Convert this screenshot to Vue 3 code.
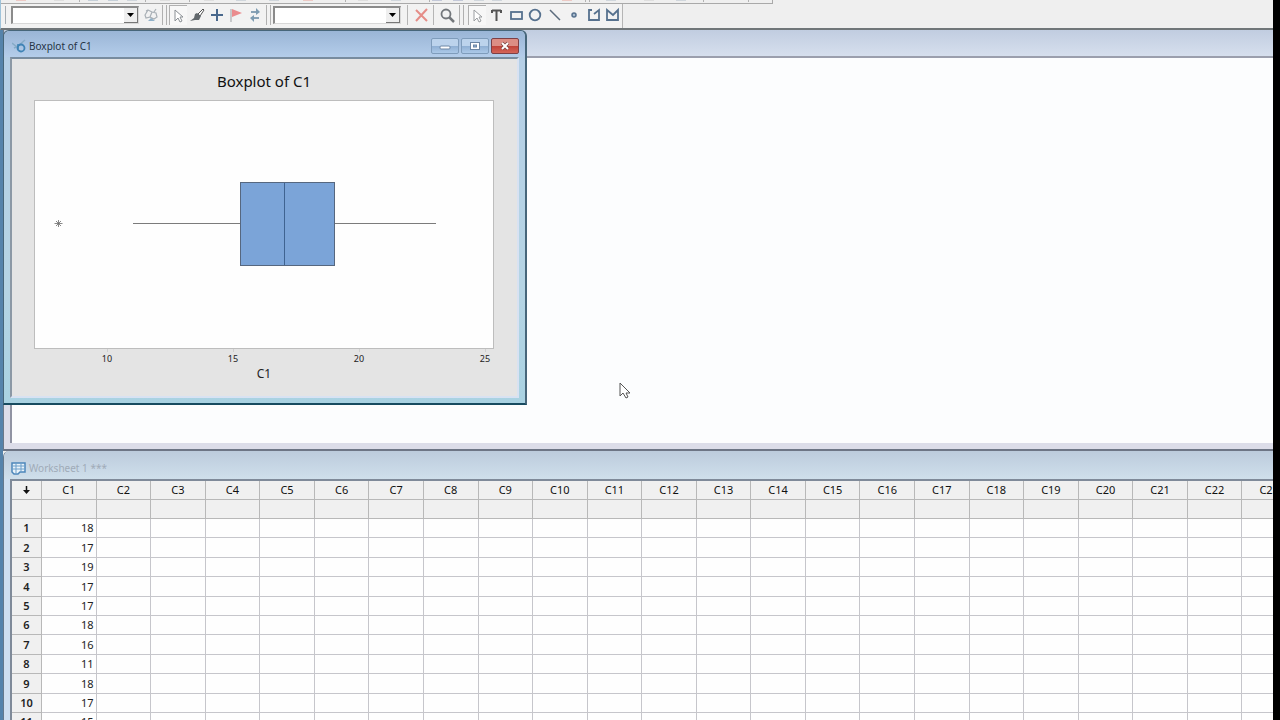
<script setup>
const columns = Array.from({ length: 23 }, (_, i) => `C${i + 1}`)
const values = [18, 17, 19, 17, 17, 18, 16, 11, 18, 17, 15]
const ticks = [
  { x: 95, label: '10' },
  { x: 221, label: '15' },
  { x: 347, label: '20' },
  { x: 473, label: '25' }
]
const upperMarks = [
  { x: 20, c: '#ecc9c4' }, { x: 58, c: '#dedede' }, { x: 92, c: '#c5cfd8' }, { x: 112, c: '#c5cfd8' },
  { x: 131, c: '#d0d6dc' }, { x: 164, c: '#dedede' }, { x: 208, c: '#dedede' }, { x: 240, c: '#d0d6dc' },
  { x: 273, c: '#d0d6dc' }, { x: 307, c: '#ecc9c4' }, { x: 362, c: '#dedede' }, { x: 395, c: '#d0d6dc' },
  { x: 436, c: '#c3c8d8' }, { x: 457, c: '#c3c8d8' }, { x: 478, c: '#d0d6dc' }, { x: 496, c: '#d0d6dc' },
  { x: 566, c: '#ecc9c4' }, { x: 610, c: '#d0d6dc' }, { x: 648, c: '#dedede' }, { x: 680, c: '#d0d6dc' }
]
const upperSeps = [78, 144, 188, 344, 428, 584, 588, 702, 747]
</script>

<template>
  <div class="page">
    <header class="toolbars">
      <div class="upper">
        <svg width="772" height="4" viewBox="0 0 772 4" aria-hidden="true">
          <rect v-for="m in upperMarks" :key="m.x" :x="m.x - 5" y="0" width="10" height="1" :fill="m.c" />
          <rect v-for="s in upperSeps" :key="s" :x="s" y="0" width="1" height="2" fill="#b2b2b2" />
        </svg>
      </div>
      <div class="row">
        <span class="grip"></span>
        <div class="combo">
          <select aria-label="Edit item"><option></option></select>
          <span class="arrow"><svg width="7" height="4" viewBox="0 0 7 4"><path d="M0 0h7L3.500 4z" fill="#000" /></svg></span>
        </div>
        <button class="tool after-combo" aria-label="Assign attributes">
          <svg width="18" height="18" viewBox="0 0 18 18" fill="none" stroke="#a9b0b6" stroke-width="1.200">
            <path d="M3 9l3-5 4 2-2 5-4 1zM6 4l-2 1M10 6l4 1 1 4-3 2-4-2M12 6l2-3M8 11l3 2" /><path d="M6 15l3-3 4 3z" fill="#8fb0c8" stroke="none" />
          </svg>
        </button>
        <span class="double"></span>
        <div class="tools edit">
          <button class="tool pressed" aria-label="Select">
            <svg width="18" height="18" viewBox="0 0 18 18"><path d="M6 3v11l3-3 2 4 2-1-2-4h3z" fill="#fff" stroke="#8a8f94" /></svg>
          </button>
          <button class="tool" aria-label="Brush">
            <svg width="18" height="18" viewBox="0 0 18 18"><path d="M15 3L10 8l2 2 4-6z" fill="#fff" stroke="#555" /><path d="M9 7l4 3-2 4H7l-5 1 4-3 1-4z" fill="#62686d" /></svg>
          </button>
          <button class="tool" aria-label="Crosshairs">
            <svg width="18" height="18" viewBox="0 0 18 18"><path d="M9 3v12M3 9h12" stroke="#49688c" stroke-width="2" /></svg>
          </button>
          <button class="tool" aria-label="Plant flag">
            <svg width="18" height="18" viewBox="0 0 18 18"><path d="M4 3v13" stroke="#9c9fa3" /><path d="M5 3l10 4-10 4z" fill="#ea8c8e" /></svg>
          </button>
          <button class="tool" aria-label="Swap">
            <svg width="18" height="18" viewBox="0 0 18 18"><path d="M5 6h6M7 12h6" stroke="#89a2b5" stroke-width="2" /><path d="M10 2l4 4-4 3zM8 9l-4 3 4 4z" fill="#7d9bb1" /></svg>
          </button>
        </div>
        <span class="double"></span>
        <div class="combo second">
          <select aria-label="Graph item"><option></option></select>
          <span class="arrow"><svg width="7" height="4" viewBox="0 0 7 4"><path d="M0 0h7L3.500 4z" fill="#000" /></svg></span>
        </div>
        <span class="single"></span>
        <button class="tool" aria-label="Delete">
          <svg width="18" height="18" viewBox="0 0 18 18"><path d="M4 4l11 11M15 3L4 15" stroke="#e58d88" stroke-width="2" /></svg>
        </button>
        <span class="single"></span>
        <button class="tool" aria-label="Zoom">
          <svg width="18" height="18" viewBox="0 0 18 18" fill="none" stroke="#73777b"><circle cx="8" cy="8" r="4.500" stroke-width="1.800" /><path d="M11 11l5 5" stroke-width="2.500" /></svg>
        </button>
        <span class="double wide"></span>
        <div class="tools draw">
          <button class="tool pressed" aria-label="Select object">
            <svg width="18" height="18" viewBox="0 0 18 18"><path d="M6 3v11l3-3 2 4 2-1-2-4h3z" fill="#fff" stroke="#9a9da0" /></svg>
          </button>
          <button class="tool" aria-label="Text">
            <svg width="18" height="18" viewBox="0 0 18 18"><path d="M5 4.500h9M9.500 4v11M5 4v3M14 4v3" stroke="#555" stroke-width="2" fill="none" /></svg>
          </button>
          <button class="tool" aria-label="Rectangle">
            <svg width="18" height="18" viewBox="0 0 18 18"><rect x="4" y="6" width="11" height="7" fill="none" stroke="#56718e" stroke-width="1.800" /></svg>
          </button>
          <button class="tool" aria-label="Ellipse">
            <svg width="18" height="18" viewBox="0 0 18 18"><circle cx="9" cy="9" r="5.300" fill="none" stroke="#56718e" stroke-width="1.800" /></svg>
          </button>
          <button class="tool" aria-label="Line">
            <svg width="18" height="18" viewBox="0 0 18 18"><path d="M4 4l10 10" stroke="#5b6b7c" stroke-width="1.500" /></svg>
          </button>
          <button class="tool" aria-label="Marker">
            <svg width="18" height="18" viewBox="0 0 18 18"><circle cx="9" cy="9" r="2" fill="#a9bccd" stroke="#56718e" stroke-width="1.500" /></svg>
          </button>
          <button class="tool" aria-label="Polyline">
            <svg width="18" height="18" viewBox="0 0 18 18"><path d="M7 4H4v10h10V4l-5 4" fill="none" stroke="#56718e" stroke-width="1.800" /></svg>
          </button>
          <button class="tool" aria-label="Polygon">
            <svg width="18" height="18" viewBox="0 0 18 18"><path d="M3 4v10h11V4l-5 5z" fill="none" stroke="#56718e" stroke-width="1.800" /></svg>
          </button>
        </div>
      </div>
    </header>

    <main class="desktop">
      <section class="session" aria-label="Session">
        <div class="session-title"></div>
        <div class="session-body"></div>
      </section>

      <section class="sheet" aria-label="Worksheet">
        <div class="sheet-title">
          <svg width="15" height="13" viewBox="0 0 15 13"><path d="M1 1h13v9H9l-2 2H3l-2-2z" fill="#e9f3fa" stroke="#4c86ba" stroke-width="1.500" /><path d="M1 4h13M1 7h13M5 1v10M10 1v9" stroke="#6d9fca" /></svg>
          <span>Worksheet 1 ***</span>
        </div>
        <div class="grid-wrap">
          <table>
            <thead>
              <tr>
                <th class="corner" aria-label="Direction"><svg width="7" height="8" viewBox="0 0 7 8"><path d="M3.500 0v5" stroke="#111" stroke-width="1.500" /><path d="M0 4h7L3.500 8z" fill="#111" /></svg></th>
                <th v-for="c in columns" :key="c" scope="col">{{ c }}</th>
              </tr>
              <tr><th></th><th v-for="c in columns" :key="c"></th></tr>
            </thead>
            <tbody>
              <tr v-for="(v, i) in values" :key="i">
                <th scope="row">{{ i + 1 }}</th>
                <td v-for="(c, j) in columns" :key="c">{{ j ? '' : v }}</td>
              </tr>
            </tbody>
          </table>
        </div>
      </section>

      <section class="plot-window" aria-label="Boxplot of C1">
        <div class="plot-title">
          <svg width="14" height="14" viewBox="0 0 14 14" fill="none"><path d="M0 4l5 4 8-7M2 9l4-2" stroke="#86aac6" stroke-width="1.500" /><circle cx="9" cy="9" r="3.500" stroke="#3f83b5" stroke-width="1.800" /><path d="M6 5v5" stroke="#3f83b5" stroke-width="1.500" /></svg>
          <span>Boxplot of C1</span>
          <div class="controls">
            <button aria-label="Minimize"><svg width="12" height="10" viewBox="0 0 12 10"><rect x="1" y="5" width="10" height="3" rx="1" fill="#fff" stroke="#6c86a4" /></svg></button>
            <button aria-label="Maximize"><svg width="12" height="10" viewBox="0 0 12 10"><rect x="1.500" y="1.500" width="9" height="7" fill="#fff" stroke="#6c86a4" /><rect x="4.500" y="4" width="3" height="2" fill="#8fb0d5" stroke="#6c86a4" /></svg></button>
            <button class="close" aria-label="Close"><svg width="12" height="10" viewBox="0 0 12 10"><path d="M3 2l6 6M9 2L3 8" stroke="#7c4440" stroke-width="3.500" /><path d="M3 2l6 6M9 2L3 8" stroke="#fff" stroke-width="2" /></svg></button>
          </div>
        </div>
        <div class="plot-body">
          <svg class="chart" viewBox="0 0 505 337" role="img" aria-label="Boxplot of C1">
            <text x="252" y="28" class="heading">Boxplot of C1</text>
            <rect x="22.500" y="41.500" width="459" height="248" fill="#fefefe" stroke="#bdbdbd" />
            <path d="M121 164.500h107M323 164.500h101" stroke="#7b7b7b" />
            <rect x="228.500" y="123.500" width="94" height="83" fill="#7ba4d8" stroke="#56677f" />
            <path d="M272.500 124v82" stroke="#3f6391" />
            <path d="M42.500 164.500h8M46.500 161v7M44 162l5 5M49 162l-5 5" stroke="#6b6b6b" stroke-width="0.800" />
            <g v-for="t in ticks" :key="t.x">
              <path :d="`M${t.x}.5 290v3`" stroke="#cfcfcf" />
              <text :x="t.x" y="303" class="tick">{{ t.label }}</text>
            </g>
            <text x="252" y="319" class="axis">C1</text>
          </svg>
        </div>
      </section>

      <svg class="cursor" width="12" height="18" viewBox="0 0 12 18" aria-hidden="true"><path d="M1 1v13l3-3 3 5 2-1-2-4h4z" fill="#fff" stroke="#555" /></svg>
    </main>
  </div>
</template>

<style>
body {
  margin: 0;
  background: #000;
}
</style>

<style scoped>
* {
  box-sizing: border-box;
}
.page {
  height: 100vh;
  display: flex;
  flex-direction: column;
  overflow: hidden;
  border-right: 7px solid #000;
  background: #efefef;
  font-family: "Noto Sans", "Open Sans", sans-serif;
  color: #222;
}
.toolbars {
  flex: none;
  border-left: 1px solid #9fc3da;
  border-bottom: 2px solid #707679;
}
.upper {
  width: 772px;
  height: 4px;
  border-right: 1px solid #a9a9a9;
  border-bottom: 1px solid #a9a9a9;
  overflow: hidden;
}
.upper svg {
  display: block;
}
.row {
  display: flex;
  align-items: center;
  width: 622px;
  height: 24px;
  padding: 0 0 2px 3px;
  border-right: 1px solid #b5b5b5;
  background: #f2f2f2;
}
.grip {
  width: 2px;
  height: 18px;
  margin-right: 5px;
  border-right: 1px solid #a5adb3;
}
.combo {
  position: relative;
  width: 128px;
  height: 18px;
}
.combo select {
  display: block;
  width: 100%;
  height: 100%;
  appearance: none;
  border: 1px solid #d8d8d8;
  border-top: 2px solid #8b8b8b;
  border-left: 2px solid #8b8b8b;
  border-radius: 0;
  background: #fff;
}
.combo .arrow {
  position: absolute;
  right: 1px;
  top: 2px;
  width: 14px;
  height: 15px;
  display: flex;
  align-items: center;
  justify-content: center;
  border-right: 1px solid #777;
  border-bottom: 1px solid #777;
  background: #efefef;
  pointer-events: none;
}
.tool {
  flex: none;
  width: 18px;
  height: 20px;
  padding: 0;
  border: 0;
  background: none;
}
.tool svg {
  display: block;
}
.after-combo {
  margin-left: 3px;
}
.pressed {
  border-top: 1px solid #b0b0b0;
  border-left: 1px solid #b0b0b0;
  background: #f7f7f7;
}
.pressed svg {
  margin-left: -1px;
}
.double {
  width: 5px;
  height: 20px;
  margin: 0 2px;
  border-left: 1px solid #b0b0b0;
  border-right: 1px solid #b0b0b0;
}
.double.wide {
  margin: 0 4px 0 3px;
}
.single {
  width: 1px;
  height: 20px;
  margin: 0 4px 0 3px;
  background: #b5b5b5;
}
.combo.second + .single {
  margin-left: 6px;
}
.tools {
  display: flex;
  justify-content: space-between;
}
.edit {
  width: 95px;
}
.draw {
  width: 154px;
}
.desktop {
  position: relative;
  flex: 1;
  min-height: 0;
  display: flex;
  flex-direction: column;
  border-left: 3px solid #5583ab;
}
.session {
  flex: none;
  height: 421px;
  display: flex;
  flex-direction: column;
  padding: 0 0 6px 6px;
  border-left: 1px solid #6b7888;
  border-bottom: 2px solid #6d7585;
  background: #dcdde9;
}
.session-title {
  height: 26px;
  margin-left: -6px;
  background: linear-gradient(#c1cde0, #d6dfed);
}
.session-body {
  flex: 1;
  border-top: 2px solid #9b9fad;
  border-left: 2px solid #9093a3;
  background: #fcfdfe;
}
.sheet {
  flex: 1;
  min-height: 0;
  display: flex;
  flex-direction: column;
  padding-left: 6px;
  border-left: 1px solid #66798c;
  border-top-left-radius: 6px;
  background: #cfdff0;
}
.sheet-title {
  flex: none;
  display: flex;
  align-items: center;
  gap: 3px;
  height: 28px;
  margin-left: -6px;
  padding: 6px 0 0 7px;
  font-size: 10px;
  color: #a0abb8;
  border-top-left-radius: 6px;
  background: linear-gradient(#bccbdc, #cfdfeb);
}
.grid-wrap {
  flex: 1;
  min-height: 0;
  overflow: hidden;
  border-top: 2px solid #7f8a99;
  border-left: 2px solid #7f8a99;
  background: #fff;
}
table {
  width: calc(100% + 24px);
  table-layout: fixed;
  border-collapse: separate;
  border-spacing: 0;
}
th,
td {
  height: 19px;
  padding: 0;
  border-right: 1px solid #c6c6cb;
  border-bottom: 1px solid #c6c6cb;
  font-size: 11px;
  line-height: 16px;
  text-align: center;
}
th {
  font-weight: 500;
  background: #f0f0f0;
  border-color: #b8b8b8;
}
thead th {
  font-weight: 400;
  color: #111;
}
tr > :first-child {
  width: 30px;
}
td {
  padding-right: 2px;
  text-align: right;
  background: #fefefe;
}
tbody tr:nth-child(5n + 2) > *,
tbody tr:nth-child(5n + 4) > * {
  height: 20px;
}
tbody th {
  font-weight: 600;
}
.corner svg {
  display: block;
  margin: 0 auto;
}
.plot-window {
  position: absolute;
  left: 0;
  top: 0;
  width: 524px;
  height: 375px;
  display: flex;
  flex-direction: column;
  padding: 0 6px 5px;
  border: 1px solid #47667a;
  border-right-width: 2px;
  border-bottom: 2px solid #174b60;
  border-radius: 6px 6px 0 0;
  background: linear-gradient(#a8c2de, #b5cfe6 30px, #b5d4e4 70%, #a9d2e2);
}
.plot-title {
  flex: none;
  display: flex;
  align-items: center;
  gap: 3px;
  height: 26px;
  margin: 0 -6px;
  padding: 4px 6px 0 8px;
  font-size: 10px;
  color: #263445;
  border-radius: 6px 6px 0 0;
  background: linear-gradient(#9ab5d6, #b4cdea);
}
.controls {
  display: flex;
  gap: 2px;
  margin-left: auto;
}
.controls button {
  display: flex;
  align-items: center;
  justify-content: center;
  width: 28px;
  height: 16px;
  padding: 0;
  border: 1px solid #7f9cbb;
  border-radius: 2px;
  background: linear-gradient(#bcd3ec 50%, #8fafd3 50%, #acc9e8);
}
.controls .close {
  border-color: #7d4046;
  background: linear-gradient(#dc8d84 50%, #c04137 50%, #d4665a);
}
.plot-body {
  flex: 1;
  min-height: 0;
  border-top: 2px solid #788c9f;
  border-left: 2px solid #8b98a5;
  border-right: 2px solid #d8e2f2;
  border-bottom: 2px solid #d8e2f2;
  background: #e4e4e4;
}
.chart {
  display: block;
  width: 100%;
  height: 100%;
}
.chart text {
  text-anchor: middle;
  fill: #222;
}
.chart .heading {
  font-size: 15px;
  fill: #111;
}
.chart .tick {
  font-size: 9px;
}
.chart .axis {
  font-size: 12px;
}
.cursor {
  position: absolute;
  left: 616px;
  top: 352px;
}
</style>
